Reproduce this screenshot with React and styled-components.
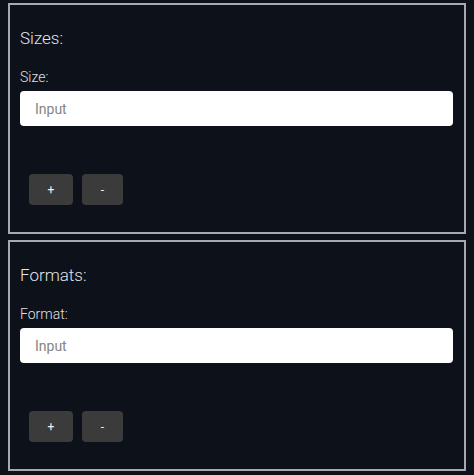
import React from "react";
import styled, { createGlobalStyle } from "styled-components";

const Global = createGlobalStyle`
  html, body { margin: 0; padding: 0; background: #0d111a; }
  body { font-family: Roboto, "Noto Sans", Arial, sans-serif; }
  * { box-sizing: border-box; }
`;

const Page = styled.div`
  display: flex;
  flex-direction: column;
  gap: 6px;
  padding: 3px 8px 4px 8px;
`;

const Panel = styled.section`
  height: 231px;
  border: 2px solid #a7a9ae;
  padding: 23px 11px 0 10px;
  display: flex;
  flex-direction: column;
`;

const Title = styled.h2`
  margin: 0;
  font-size: 17px;
  line-height: 20px;
  font-weight: 300;
  color: #e4e4e6;
`;

const Label = styled.label`
  margin-top: 21px;
  font-size: 14px;
  line-height: 16px;
  font-weight: 300;
  color: #e0e0e2;
`;

const Input = styled.input`
  margin-top: 6px;
  height: 35px;
  width: 100%;
  border: none;
  border-radius: 4px;
  background: #ffffff;
  padding: 0 15px;
  font-family: Roboto, Arial, sans-serif;
  font-size: 14px;
  color: #333;
  outline: none;
  &::placeholder { color: #858585; }
`;

const Buttons = styled.div`
  display: flex;
  gap: 9px;
  margin-top: 48px;
  padding-left: 9px;
`;

const Btn = styled.button`
  width: ${(p) => p.$w}px;
  height: 31px;
  border: none;
  border-radius: 4px;
  background: #3b3b3b;
  color: #f0f0f0;
  font-family: Roboto, Arial, sans-serif;
  font-size: 12px;
  cursor: pointer;
  padding: 0;
`;

function Section({ title, label }) {
  return (
    <Panel>
      <Title>{title}</Title>
      <Label>{label}</Label>
      <Input placeholder="Input" />
      <Buttons>
        <Btn $w={44}>+</Btn>
        <Btn $w={41}>-</Btn>
      </Buttons>
    </Panel>
  );
}

export default function App() {
  return (
    <>
      <Global />
      <Page>
        <Section title="Sizes:" label="Size:" />
        <Section title="Formats:" label="Format:" />
      </Page>
    </>
  );
}
